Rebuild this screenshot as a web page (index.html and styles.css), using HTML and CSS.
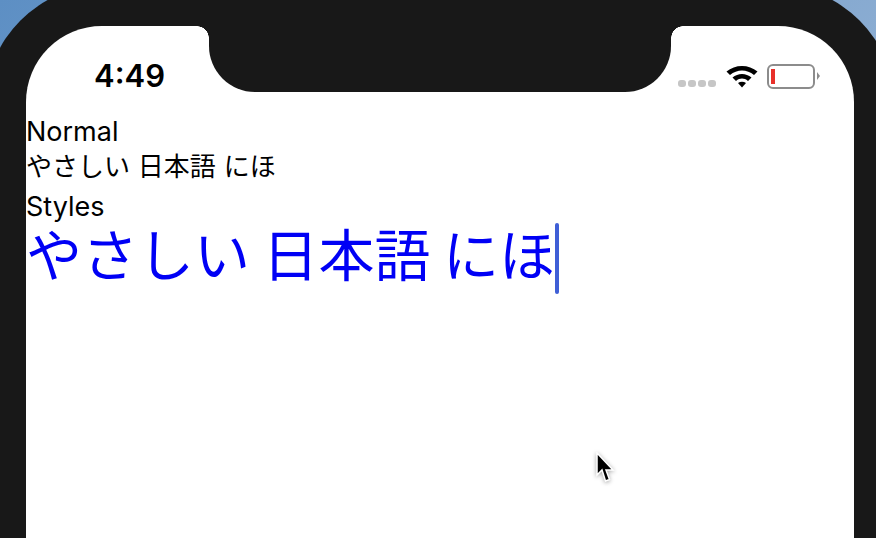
FILE: index.html
```html
<!DOCTYPE html>
<html lang="ja">
<head>
  <meta charset="UTF-8">
  <meta name="viewport" content="width=device-width, initial-scale=1.0">
  <title>Styles</title>
  <link rel="stylesheet" href="styles.css">
</head>
<body>
  <div class="device">
    <div class="screen">
      <div class="notch"></div>

      <div class="status-bar">
        <span class="time">4:49</span>
        <div class="status-icons">
          <div class="signal">
            <span></span><span></span><span></span><span></span>
          </div>
          <svg class="wifi" width="32" height="24" viewBox="0 0 32 24">
            <path d="M0.5 7.5C9 0 23 0 31.5 7.5L28 11C21 5 11 5 4 11Z"/>
            <path d="M6.5 13.5C12 8.8 20 8.8 25.5 13.5L22 17C18 13.8 14 13.8 10 17Z"/>
            <path d="M12 19C14.5 17.2 17.5 17.2 20 19L16 23.5Z"/>
          </svg>
          <div class="battery">
            <div class="battery-body"><div class="battery-level"></div></div>
            <div class="battery-cap"></div>
          </div>
        </div>
      </div>

      <div class="content">
        <div class="label label-normal">Normal</div>
        <div class="text-normal">やさしい 日本語 にほ</div>
        <div class="label label-styles">Styles</div>
        <div class="text-styled">やさしい 日本語 にほ<span class="caret"></span></div>
      </div>

      <svg class="pointer" width="24" height="36" viewBox="0 0 24 36">
        <path d="M3 1V23L8 18L11.5 29L15.5 27.5L12 18H19Z" fill="#000" stroke="#fff" stroke-width="1.5"/>
      </svg>
    </div>
  </div>
</body>
</html>
```

FILE: styles.css
```css
html, body {
  height: 100%;
}

body {
  margin: 0;
  overflow: hidden;
  background: linear-gradient(135deg, #5d8fc4, #a3bcd9);
  font-family: 'Inter', 'Liberation Sans', sans-serif;
}

.device {
  box-sizing: border-box;
  width: 910px;
  height: 553px;
  margin: -15px 0 0 -15px;
  padding: 41px 41px 0;
  background-color: #181818;
  border-radius: 121px 121px 0 0;
  display: flex;
}

.screen {
  position: relative;
  flex: 1;
  background-color: #fff;
  border-radius: 76px 76px 0 0;
}

/* Cut-out at the top of the screen */
.notch {
  position: absolute;
  top: 0;
  left: 0;
  right: 0;
  width: 462px;
  height: 66px;
  margin: 0 auto;
  background-color: #181818;
  border-radius: 0 0 46px 46px;
}

.notch::before,
.notch::after {
  content: '';
  position: absolute;
  top: 0;
  width: 12px;
  height: 12px;
}

.notch::before {
  left: -12px;
  background: radial-gradient(circle at 0 100%, transparent 11.5px, #181818 12px);
}

.notch::after {
  right: -12px;
  background: radial-gradient(circle at 100% 100%, transparent 11.5px, #181818 12px);
}

.status-bar {
  height: 88px;
  display: flex;
  justify-content: space-between;
  align-items: center;
  padding: 12px 34px 0 68px;
  box-sizing: border-box;
}

.time {
  margin-bottom: 2px;
  font-size: 31px;
  font-weight: 600;
  color: #000;
}

.status-icons {
  display: flex;
  align-items: center;
}

.signal {
  display: flex;
  gap: 2px;
  margin-right: 10px;
  margin-top: 14px;
}

.signal span {
  width: 8px;
  height: 7px;
  border-radius: 3px;
  background-color: #c6c6c6;
}

.wifi {
  margin-right: 9px;
}

.battery {
  display: flex;
  align-items: center;
}

.battery-body {
  box-sizing: border-box;
  width: 48px;
  height: 25px;
  padding: 3px 2px;
  border: 2px solid #8c8c8c;
  border-radius: 6px;
}

.battery-level {
  width: 4px;
  height: 100%;
  background-color: #e8302a;
}

.battery-cap {
  width: 0;
  height: 0;
  margin-left: 2px;
  border-left: 3px solid #8c8c8c;
  border-top: 4px solid transparent;
  border-bottom: 4px solid transparent;
}

.content {
  color: #000;
}

.label {
  font-size: 27px;
}

.label-normal {
  margin-top: -1px;
  line-height: 38px;
}

.label-styles {
  line-height: 20px;
}

.text-normal {
  font-family: 'Noto Sans CJK JP', sans-serif;
  font-size: 26px;
  line-height: 28px;
  word-spacing: 2px;
  margin-bottom: 18px;
}

.text-styled {
  display: flex;
  align-items: center;
  height: 70px;
  font-family: 'Noto Sans CJK JP', sans-serif;
  font-size: 56px;
  line-height: 70px;
  color: #0000f5;
  white-space: pre;
}

.caret {
  width: 4px;
  height: 71px;
  margin-top: 13px;
  border-radius: 2px;
  background-color: #3f5fd6;
}

.pointer {
  position: absolute;
  left: 568px;
  top: 426px;
  filter: drop-shadow(0 1px 2px rgba(0, 0, 0, 0.35));
}
```
